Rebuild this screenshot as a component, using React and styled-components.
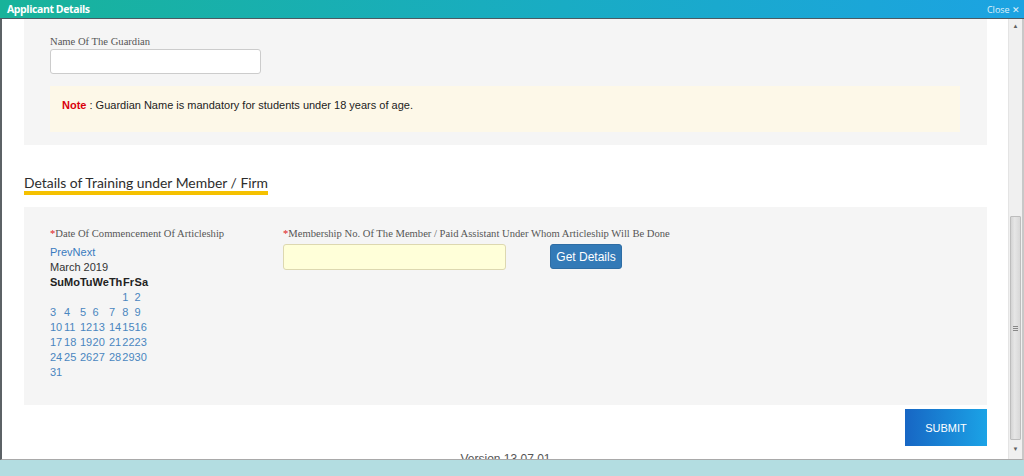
import styled, { createGlobalStyle } from 'styled-components'

const GlobalStyle = createGlobalStyle`
  html, body {
    margin: 0;
    padding: 0;
    height: 100%;
    overflow: hidden;
    background: #b3dde1;
  }
  * {
    box-sizing: border-box;
  }
`

const Modal = styled.div`
  display: flex;
  flex-direction: column;
  width: 1024px;
  height: 476px;
  background: #b3dde1;
`

const Header = styled.div`
  display: flex;
  align-items: center;
  justify-content: space-between;
  height: 19px;
  padding: 0 4px 0 7px;
  background: linear-gradient(to right, #18b39a, #19acc4 55%, #1ca3e2);
  border-bottom: 1px solid #4b5a63;
  color: #fff;
  font-family: 'Open Sans', sans-serif;
`

const Title = styled.span`
  font-size: 10.5px;
  font-weight: 700;
  letter-spacing: -0.4px;
`

const Close = styled.span`
  font-size: 9px;
  opacity: 0.85;
`

const Body = styled.div`
  display: flex;
  height: 441px;
  background: #fff;
  border-left: 2px solid #5c6266;
  border-right: 2px solid #c8c8c8;
  border-bottom: 1px solid #a9a9a9;
`

const Content = styled.div`
  flex: 1;
  padding: 0 21px 0 22px;
  overflow: hidden;
`

const Panel = styled.div`
  background: #f5f5f5;
  padding: ${(p) => p.pad};
`

const Label = styled.div`
  font-family: 'Liberation Serif', serif;
  font-size: 10.6px;
  line-height: 13px;
  color: #555;
  white-space: nowrap;
`

const Star = styled.span`
  color: #e02020;
`

const TextInput = styled.div`
  width: ${(p) => p.w}px;
  height: ${(p) => p.h}px;
  margin-top: ${(p) => p.mt}px;
  background: ${(p) => p.bg};
  border: 1px solid ${(p) => p.line};
  border-radius: 3px;
`

const Note = styled.div`
  margin-top: 12px;
  padding: 12px 12px 19px;
  background: #fdf8e8;
  font-family: 'Liberation Sans', Arial, sans-serif;
  font-size: 11px;
  line-height: 15px;
  color: #222;
`

const NoteTag = styled.b`
  color: #d9000d;
`

const SectionHead = styled.div`
  padding: 29px 0 12px 0;
`

const Heading = styled.span`
  display: inline-block;
  font-family: Lato, 'Open Sans', sans-serif;
  font-size: 13.9px;
  color: #2d2d2d;
  line-height: 17px;
  border-bottom: 4px solid #f5c100;
`

const FormRow = styled.div`
  display: grid;
  grid-template-columns: 233px 267px auto;
  align-items: start;
`

const Cal = styled.div`
  font-family: 'Liberation Sans', Arial, sans-serif;
  font-size: 11px;
  line-height: 15px;
  color: #333;
  padding-top: 5px;
`

const Link = styled.span`
  color: #3a7bbf;
`

const Table = styled.table`
  border-collapse: collapse;
  border-spacing: 0;
  font-size: 11px;
  line-height: 15px;

  th {
    padding: 0;
    font-weight: 700;
    color: #222;
  }
  td {
    padding: 0;
    text-align: left;
    color: #4a86c0;
  }
`

const BlueButton = styled.div`
  display: flex;
  align-items: center;
  justify-content: center;
  width: 72px;
  height: 25px;
  margin-top: 17px;
  background: #337ab7;
  border: 1px solid #2e6da4;
  border-radius: 3px;
  color: #fff;
  font-family: 'Liberation Sans', Arial, sans-serif;
  font-size: 12px;
`

const Actions = styled.div`
  display: flex;
  justify-content: flex-end;
  padding-top: 4px;
`

const Submit = styled.div`
  display: flex;
  align-items: center;
  justify-content: center;
  width: 82px;
  height: 37px;
  background: linear-gradient(to right, #1766c4, #1ba3e6);
  color: #fff;
  font-family: 'Liberation Sans', Arial, sans-serif;
  font-size: 11px;
`

const Version = styled.div`
  padding-top: 6px;
  text-align: center;
  font-family: 'Liberation Sans', Arial, sans-serif;
  font-size: 12px;
  color: #555;
`

const Scrollbar = styled.div`
  display: flex;
  flex-direction: column;
  width: 14px;
  background: #f0f0f0;
  border-left: 1px solid #e4e4e4;
`

const Arrow = styled.div`
  display: flex;
  align-items: center;
  justify-content: center;
  height: ${(p) => p.h}px;
  color: #606060;
  font-size: 6px;
`

const Thumb = styled.div`
  display: flex;
  align-items: center;
  justify-content: center;
  margin: ${(p) => p.top}px 1px 0;
  height: ${(p) => p.h}px;
  background: linear-gradient(to right, #d4d4d4, #e6e6e6 40%, #d8d8d8);
  border: 1px solid #bdbdbd;
  border-radius: 1px;
`

const Grip = styled.div`
  width: 5px;
  height: 5px;
  border-top: 1px solid #888;
  border-bottom: 1px solid #888;
  position: relative;
  &::after {
    content: '';
    position: absolute;
    left: 0;
    right: 0;
    top: 1px;
    border-top: 1px solid #888;
  }
`

const Spacer = styled.div`
  flex: 1;
`

const weeks = [
  ['', '', '', '', '', '1', '2'],
  ['3', '4', '5', '6', '7', '8', '9'],
  ['10', '11', '12', '13', '14', '15', '16'],
  ['17', '18', '19', '20', '21', '22', '23'],
  ['24', '25', '26', '27', '28', '29', '30'],
  ['31', '', '', '', '', '', ''],
]

const days = ['Su', 'Mo', 'Tu', 'We', 'Th', 'Fr', 'Sa']

const Calendar = () => (
  <Cal>
    <Link>PrevNext</Link>
    <div>March 2019</div>
    <Table>
      <thead>
        <tr>
          {days.map((d) => (
            <th key={d}>{d}</th>
          ))}
        </tr>
      </thead>
      <tbody>
        {weeks.map((w, i) => (
          <tr key={i}>
            {w.map((n, j) => (
              <td key={j}>{n}</td>
            ))}
          </tr>
        ))}
      </tbody>
    </Table>
  </Cal>
)

const App = () => {
  return (
    <>
      <GlobalStyle />
      <Modal>
        <Header>
          <Title>Applicant Details</Title>
          <Close>Close ✕</Close>
        </Header>
        <Body>
          <Content>
            <Panel pad="16px 27px 13px 26px">
              <Label>Name Of The Guardian</Label>
              <TextInput w={211} h={25} mt={1} bg="#fff" line="#ccc" />
              <Note>
                <NoteTag>Note</NoteTag> : Guardian Name is mandatory for students under 18 years of age.
              </Note>
            </Panel>

            <SectionHead>
              <Heading>Details of Training under Member / Firm</Heading>
            </SectionHead>

            <Panel pad="20px 26px 25px 26px">
              <FormRow>
                <div>
                  <Label>
                    <Star>*</Star>Date Of Commencement Of Articleship
                  </Label>
                  <Calendar />
                </div>
                <div>
                  <Label>
                    <Star>*</Star>Membership No. Of The Member / Paid Assistant Under Whom Articleship Will Be Done
                  </Label>
                  <TextInput w={223} h={26} mt={4} bg="#ffffd9" line="#ddd8b0" />
                </div>
                <BlueButton>Get Details</BlueButton>
              </FormRow>
            </Panel>

            <Actions>
              <Submit>SUBMIT</Submit>
            </Actions>
            <Version>Version 13.07.01</Version>
          </Content>
          <Scrollbar>
            <Arrow h={14}>▲</Arrow>
            <Thumb top={184} h={234}>
              <Grip />
            </Thumb>
            <Spacer />
            <Arrow h={20}>▼</Arrow>
          </Scrollbar>
        </Body>
      </Modal>
    </>
  )
}

export default App
